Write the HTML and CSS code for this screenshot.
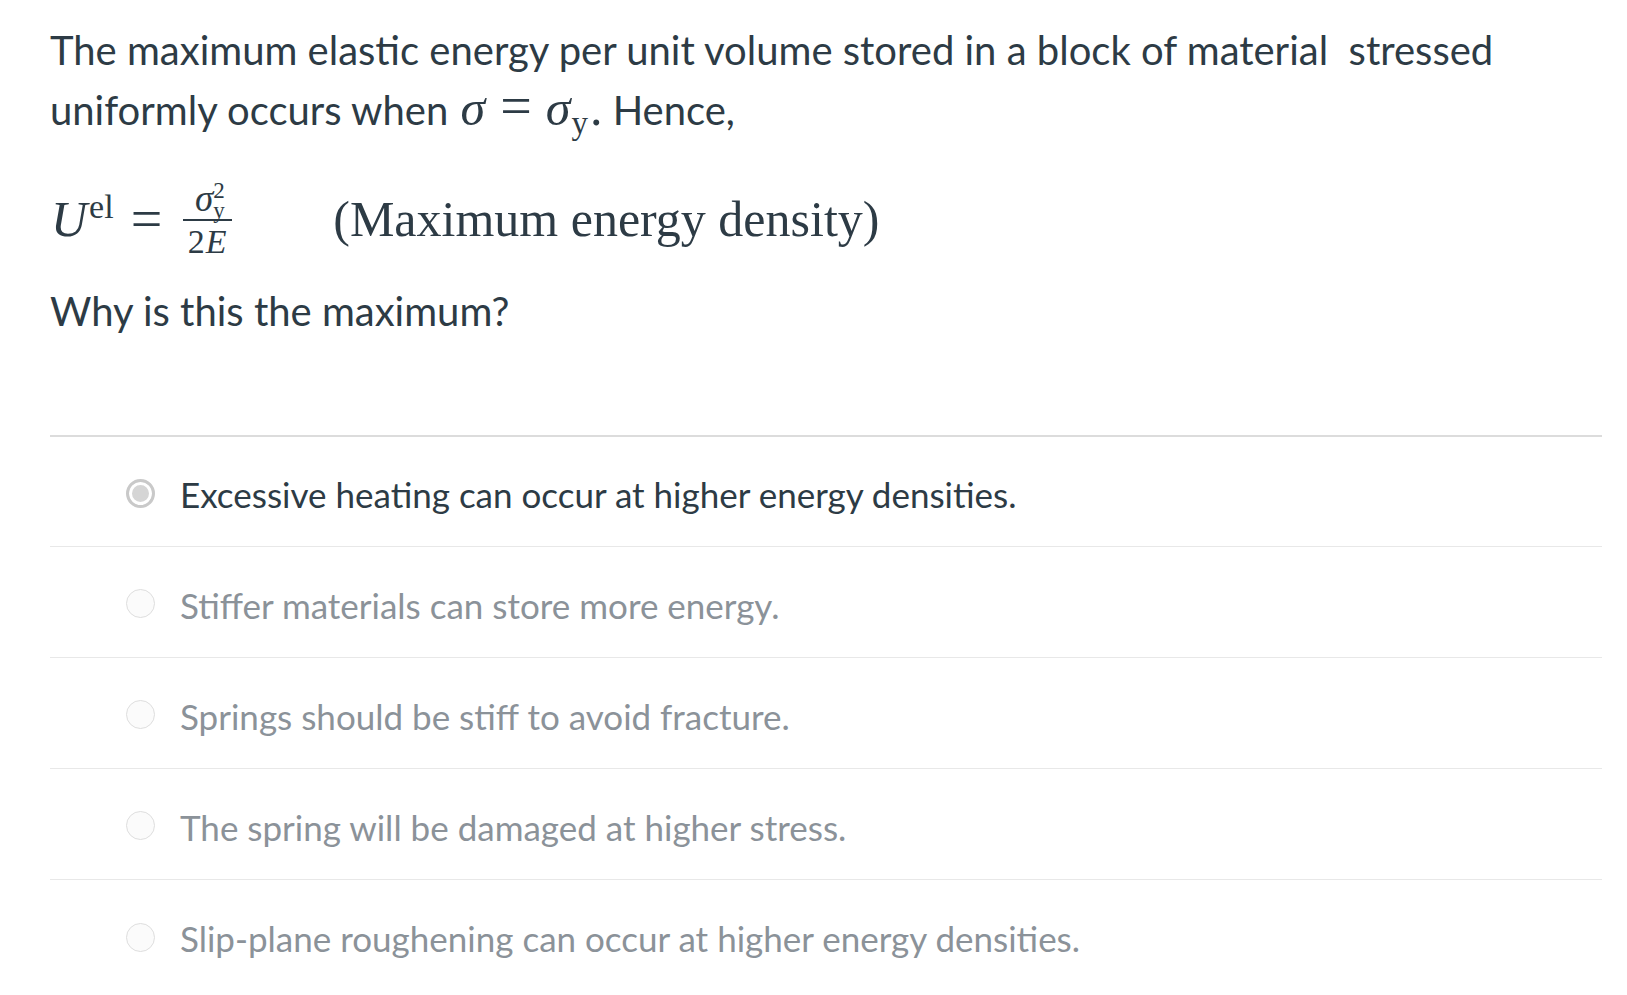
FILE: index.html
```html
<!DOCTYPE html>
<html lang="en">
<head>
<meta charset="utf-8">
<title>Quiz question</title>
<link rel="stylesheet" href="styles.css">
</head>
<body>
<div class="quiz">
  <div class="question-text">
    <p class="para">The maximum elastic energy per unit volume stored in a block of material&nbsp; stressed uniformly occurs when <span class="math"><span class="mi">σ</span><span class="mo">=</span><span class="mi">σ</span><sub class="msub">y</sub><span class="mpunct">.</span></span> Hence,</p>
    <div class="display-math">
      <span class="dm-lhs"><span class="mi">U</span><sup class="msup">el</sup></span>
      <span class="big-eq">=</span>
      <span class="frac">
        <span class="num"><span class="mi">σ</span><span class="ss"><span class="ss-sup">2</span><span class="ss-sub">y</span></span></span>
        <span class="bar"></span>
        <span class="den">2<span class="mi">E</span></span>
      </span>
      <span class="tag">(Maximum energy density)</span>
    </div>
    <p class="para">Why is this the maximum?</p>
  </div>
  <div class="answers">
    <div class="answer selected"><span class="radio"></span><span class="answer-label">Excessive heating can occur at higher energy densities.</span></div>
    <div class="answer"><span class="radio"></span><span class="answer-label">Stiffer materials can store more energy.</span></div>
    <div class="answer"><span class="radio"></span><span class="answer-label">Springs should be stiff to avoid fracture.</span></div>
    <div class="answer"><span class="radio"></span><span class="answer-label">The spring will be damaged at higher stress.</span></div>
    <div class="answer"><span class="radio"></span><span class="answer-label">Slip-plane roughening can occur at higher energy densities.</span></div>
  </div>
</div>
</body>
</html>
```
FILE: styles.css
```css
html, body {
  margin: 0;
  padding: 0;
  background: #ffffff;
}
body {
  font-family: "Lato", "Noto Sans", sans-serif;
  color: #2d3b45;
}
.quiz {
  padding: 20px 25px 0 50px;
}
.para {
  margin: 0;
  font-size: 40px;
  line-height: 60px;
}
.math {
  font-family: "Liberation Serif", "Times New Roman", serif;
  font-size: 50px;
  line-height: 0;
  margin-left: 2px;
}
.mi {
  font-style: italic;
  font-family: "Liberation Serif", "Times New Roman", serif;
}
.mo {
  font-family: "Liberation Serif", serif;
  font-size: 56px;
  line-height: 0;
  padding: 0 14px 0 15px;
}
.msub {
  font-size: 33px;
  vertical-align: -9px;
  line-height: 0;
  margin-left: 1px;
}
.mpunct {
  margin-left: 2px;
}
.display-math {
  box-sizing: border-box;
  height: 141px;
  padding-top: 17px;
  display: flex;
  align-items: center;
  font-family: "Liberation Serif", "Times New Roman", serif;
  white-space: nowrap;
}
.dm-lhs {
  font-size: 50px;
  line-height: 1;
  margin-left: 1px;
}
.msup {
  font-size: 34px;
  font-style: normal;
  vertical-align: 18px;
  line-height: 0;
  margin-left: 2px;
}
.big-eq {
  font-size: 56px;
  line-height: 1;
  margin-left: 17px;
  margin-right: 21px;
}
.frac {
  display: inline-flex;
  flex-direction: column;
  align-items: center;
  width: 49px;
}
.num {
  font-size: 37px;
  line-height: 1;
  white-space: nowrap;
  display: flex;
  align-items: flex-end;
  padding-bottom: 2px;
  padding-left: 4px;
}
.ss {
  display: inline-flex;
  flex-direction: column;
  font-size: 23px;
  line-height: 0.85;
  margin-bottom: -4px;
}
.bar {
  display: block;
  width: 49px;
  height: 2px;
  background: #2d3b45;
}
.den {
  font-size: 34px;
  line-height: 1;
  padding-top: 4px;
  letter-spacing: 1px;
}
.tag {
  font-size: 50px;
  line-height: 1;
  margin-left: 101px;
}
.answers {
  margin-top: 94px;
  border-top: 2px solid #dcdcdc;
}
.answer {
  box-sizing: border-box;
  display: flex;
  align-items: center;
  height: 111px;
  padding-top: 5px;
  border-bottom: 1px solid #e8e8e8;
  padding-left: 76px;
  font-size: 35px;
  color: #8b9299;
}
.answer:first-child {
  height: 110px;
}
.answer:last-child {
  border-bottom: none;
}
.answer.selected {
  color: #2d3b45;
}
.radio {
  width: 27px;
  height: 27px;
  border-radius: 50%;
  border: 1px solid #dedede;
  background: #fbfbfb;
  margin-right: 25px;
  margin-top: -2px;
  flex: none;
  box-sizing: content-box;
}
.answer.selected .radio {
  width: 23px;
  height: 23px;
  border: 3px solid #c9c9c9;
  background: #d5d5d5;
  box-shadow: inset 0 0 0 3px #ffffff;
}
```
